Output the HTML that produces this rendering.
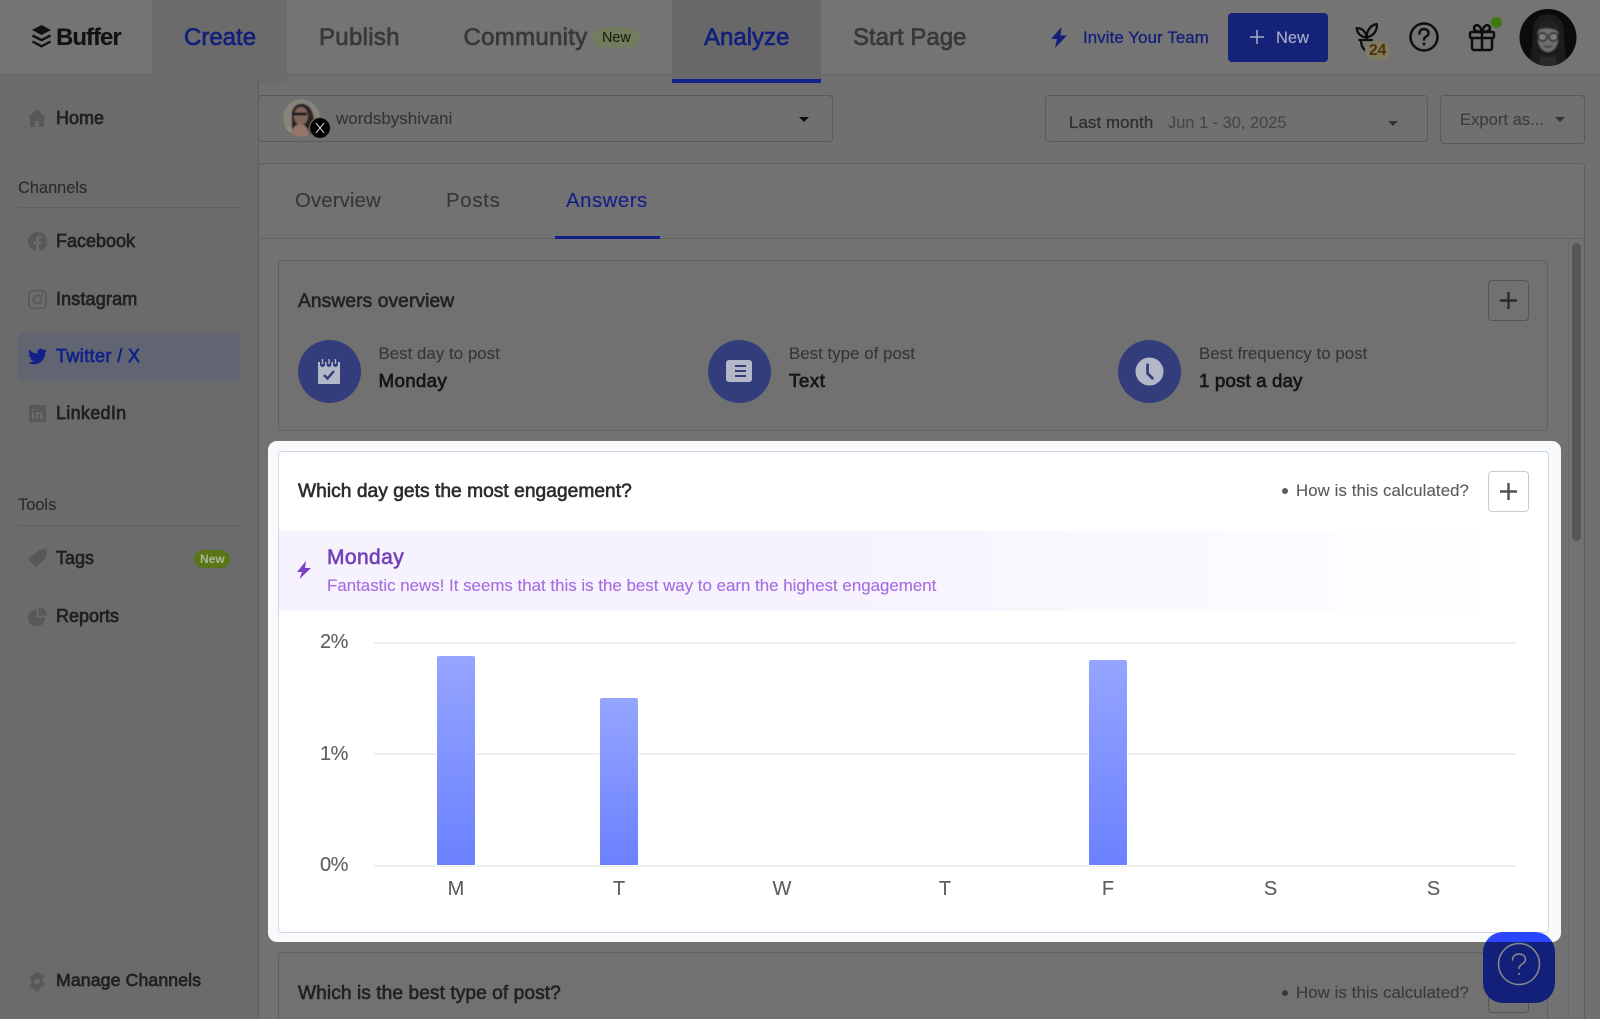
<!DOCTYPE html>
<html lang="en"><head><meta charset="utf-8"><title>Buffer Analyze</title>
<style>
*{box-sizing:border-box}
html{margin:0;padding:0;width:1600px;height:1019px;overflow:hidden}
body{margin:0;padding:0;position:relative;width:1600px;height:1019px;overflow:hidden;background:#707070;font-family:"Liberation Sans",Arial,sans-serif;color:#2b2b2b}
#p{position:absolute;left:0;top:0;width:1600px;height:1019px;overflow:hidden}
.a{position:absolute}
.t{position:absolute;white-space:nowrap;line-height:20px;height:20px;margin-top:-10px;-webkit-text-stroke:.12px currentColor}
.m{-webkit-text-stroke:.6px currentColor}
.n{font-size:24px;color:#383838;-webkit-text-stroke:.7px currentColor}
.s{font-size:18px;color:#202020;-webkit-text-stroke:.7px currentColor;left:56px}
.h{font-size:16.4px;color:#2a2a2a;left:18px}
.b{position:absolute;border:1px solid #5a5a5a;border-radius:4px}
.l{font-size:16.8px;letter-spacing:.06px;color:#363636}
.v{font-size:18.8px;color:#171717;-webkit-text-stroke:.7px currentColor}
.c{position:absolute;width:63px;height:63px;border-radius:50%;background:#343d7c;top:340px}
.pl{position:absolute;left:1488px;width:41px;height:41px;border-radius:4px}
.g{position:absolute;left:374px;width:1142px;height:2px;background:#eee}
.y{font-size:20px;letter-spacing:-.5px;color:#5e5e5e;left:320px}
.x{font-size:20px;color:#5e5e5e;width:40px;text-align:center}
.bar{position:absolute;width:38px;background:linear-gradient(#95a5ff,#6b80ff);border-radius:2px 2px 0 0;box-shadow:0 0 0 1px #fff}
.tb{font-size:20.4px;color:#363636}
svg{position:absolute;display:block}
</style></head>
<body><div id="p">
<!-- top bar -->
<div class="a" style="left:0;top:0;width:1600px;height:76px;background:#747474;border-bottom:2px solid #6a6a6a"></div>
<div class="a" style="left:152px;top:0;width:135px;height:83px;background:#6b6b6b"></div>
<div class="a" style="left:672px;top:0;width:149px;height:83px;background:#686868;border-bottom:4px solid #14248c"></div>

<svg style="left:31px;top:25px" width="21" height="23" viewBox="0 0 21 23"><path d="M10.500 0 20 5 10.500 10 1 5z" fill="#111"/><path d="M1.500 10.500l9 4.600 9-4.600M1.500 16.500l9 4.800 9-4.800" fill="none" stroke="#111" stroke-width="2.400"/></svg>
<div class="t" style="left:56px;top:38px;font-size:24px;font-weight:700;letter-spacing:-1px;color:#121212">Buffer</div>
<div class="t n" style="left:184px;top:38px;color:#13207a">Create</div>
<div class="t n" style="left:319px;top:38px;letter-spacing:.3px">Publish</div>
<div class="t n" style="left:463.500px;top:38px;letter-spacing:.3px">Community</div>
<div class="a" style="left:593px;top:27px;width:46px;height:21px;border-radius:11px;background:#747c5f"></div>
<div class="t" style="left:602px;top:37.500px;font-size:14.400px;color:#1a240e">New</div>
<div class="t n" style="left:704px;top:38px;color:#13207a">Analyze</div>
<div class="t n" style="left:853px;top:38px">Start Page</div>

<svg style="left:1049px;top:27px" width="20" height="21" viewBox="0 0 20 21"><path d="M12.500 0 2 12h6l-2 9L18 8.500h-6.500z" fill="#13207a"/></svg>
<div class="t" style="left:1083px;top:38px;font-size:16.800px;letter-spacing:.13px;color:#13207a;-webkit-text-stroke:.3px currentColor">Invite Your Team</div>
<div class="a" style="left:1228px;top:13px;width:100px;height:49px;border-radius:4px;background:#142278"></div>
<svg style="left:1250px;top:30px" width="14" height="14" viewBox="0 0 14 14"><path d="M7 0v14M0 7h14" stroke="#a8adc8" stroke-width="1.500"/></svg>
<div class="t" style="left:1276px;top:38px;font-size:16.500px;color:#a8adc8">New</div>

<svg style="left:1354px;top:22px" width="30" height="32" viewBox="0 0 30 32" fill="none" stroke="#0e0e0e" stroke-width="2.300" stroke-linejoin="round" stroke-linecap="round"><path d="M12.700 18V15.300C7 15.300 3 11 2.700 6.300c5-.6 9 3 10 9M12.700 15.300c0-7 4-12.300 10-13.300 1 6-3 12-10 13.300M5.300 18h12.500M7 18c0 5 1 8 4 10"/></svg>
<div class="a" style="left:1365px;top:41px;width:25px;height:20px;border-radius:10px;background:#7f7b62"></div>
<div class="t" style="left:1369px;top:51px;font-size:15.500px;font-weight:700;color:#4c340a">24</div>
<svg style="left:1409px;top:22px" width="30" height="30" viewBox="0 0 30 30" fill="none" stroke="#0e0e0e" stroke-width="2.500" stroke-linecap="round"><circle cx="15" cy="15" r="13.500"/><path d="M10.500 11.500c0-3 2.200-4.500 4.500-4.500s4.500 1.500 4.500 4.200c0 3.300-4.500 3.300-4.500 6.300"/><circle cx="15" cy="22" r=".6" stroke-width="1.800"/></svg>
<svg style="left:1468px;top:23px" width="28" height="29" viewBox="0 0 28 29" fill="none" stroke="#0e0e0e" stroke-width="2.500" stroke-linejoin="round"><rect x="2" y="9" width="24" height="6" rx="1.500"/><path d="M4 15v10a2 2 0 0 0 2 2h16a2 2 0 0 0 2-2V15M14 9v18M14 9c-6 0-8-2-8-4s3-4 5-2 3 6 3 6 1-4 3-6 5 0 5 2-2 4-8 4z"/></svg>
<div class="a" style="left:1491px;top:17px;width:11px;height:11px;border-radius:50%;background:#3f7a10"></div>
<svg style="left:1519px;top:9px" width="58" height="57" viewBox="0 0 58 57"><defs><clipPath id="av"><circle cx="29" cy="28.500" r="28.500"/></clipPath><filter id="bl"><feGaussianBlur stdDeviation=".7"/></filter></defs><g clip-path="url(#av)"><rect width="58" height="57" fill="#0b0b0b"/><g filter="url(#bl)"><path d="M14 30C12 12 20 5 29 5s18 6 16 26l3 26H10z" fill="#1c1c1c"/><ellipse cx="29" cy="28" rx="10.500" ry="15" fill="#6f6f6f"/><path d="M18 22c2-8 8-11 13-10 5 0 9 4 9 11-6-4-16-5-22-1z" fill="#222"/><ellipse cx="23.500" cy="28" rx="4.500" ry="4" fill="#7d7d7d" stroke="#111" stroke-width="1.400"/><ellipse cx="34.500" cy="28" rx="4.500" ry="4" fill="#7d7d7d" stroke="#111" stroke-width="1.400"/><path d="M25 37q4 2 8 0" stroke="#2f2f2f" stroke-width="1.500" fill="none"/><path d="M22 46c4 3 10 3 14 0l2 11H20z" fill="#2c2c2c"/></g></g></svg>

<!-- sidebar -->
<div class="a" style="left:0;top:77px;width:259px;height:942px;background:#6b6b6b;border-right:1px solid #5f5f5f"></div>
<svg style="left:28px;top:109px" width="18" height="18" viewBox="0 0 18 18"><path d="M9 0 18 9h-2v9h-5v-6H7v6H2V9H0z" fill="#585858"/></svg>
<div class="t s" style="top:118px">Home</div>
<div class="t h" style="top:188px">Channels</div>
<div class="a" style="left:18px;top:207px;width:222px;height:1px;background:#5f5f5f"></div>
<svg style="left:28px;top:232px" width="19" height="19" viewBox="0 0 24 24"><path fill="#585858" d="M24 12.073c0-6.627-5.373-12-12-12s-12 5.373-12 12c0 5.990 4.388 10.954 10.125 11.854v-8.385H7.078v-3.470h3.047V9.430c0-3.007 1.792-4.669 4.533-4.669 1.312 0 2.686.235 2.686.235v2.953H15.830c-1.491 0-1.956.925-1.956 1.874v2.250h3.328l-.532 3.470h-2.796v8.385C19.612 23.027 24 18.062 24 12.073z"/></svg>
<div class="t s" style="top:241px">Facebook</div>
<svg style="left:28px;top:290px" width="19" height="19" viewBox="0 0 19 19" fill="none" stroke="#585858" stroke-width="1.500"><rect x=".8" y=".8" width="17.400" height="17.400" rx="4"/><circle cx="9.500" cy="9.500" r="4"/><circle cx="14.300" cy="4.700" r=".5"/></svg>
<div class="t s" style="top:299px;letter-spacing:.15px">Instagram</div>
<div class="a" style="left:18px;top:333px;width:222px;height:48px;border-radius:4px;background:#616471"></div>
<svg style="left:28px;top:347px" width="19" height="19" viewBox="0 0 24 24"><path fill="#14208a" d="M23.953 4.570a10 10 0 01-2.825.775 4.958 4.958 0 002.163-2.723c-.951.555-2.005.959-3.127 1.184a4.920 4.920 0 00-8.384 4.482C7.690 8.095 4.067 6.130 1.640 3.162a4.822 4.822 0 00-.666 2.475c0 1.710.870 3.213 2.188 4.096a4.904 4.904 0 01-2.228-.616v.060a4.923 4.923 0 003.946 4.827 4.996 4.996 0 01-2.212.085 4.936 4.936 0 004.604 3.417 9.867 9.867 0 01-6.102 2.105c-.390 0-.779-.023-1.170-.067a13.995 13.995 0 007.557 2.209c9.053 0 13.998-7.496 13.998-13.985 0-.210 0-.420-.015-.630A9.935 9.935 0 0024 4.590z"/></svg>
<div class="t s" style="top:356px;color:#14208a;letter-spacing:.4px">Twitter / X</div>
<svg style="left:29px;top:405px" width="17" height="17" viewBox="0 0 17 17"><path fill="#585858" fill-rule="evenodd" d="M1 0h15a1 1 0 0 1 1 1v15a1 1 0 0 1-1 1H1a1 1 0 0 1-1-1V1a1 1 0 0 1 1-1zM3 7v7h2V7zm0-3v2h2V4zm4 3v7h2v-4c0-1.500 2-1.500 2 0v4h2.500V9.500c0-3-3-3.300-4.500-1.700V7z"/></svg>
<div class="t s" style="top:413px;letter-spacing:.3px">LinkedIn</div>
<div class="t h" style="top:505px">Tools</div>
<div class="a" style="left:18px;top:525px;width:222px;height:1px;background:#5f5f5f"></div>
<svg style="left:28px;top:549px" width="19" height="18" viewBox="0 0 19 18"><path fill="#585858" d="M11 1.200 17 0a1.500 1.500 0 0 1 2 1.500L18.200 8 9.500 17.500a1.500 1.500 0 0 1-2 0L.5 11a1.500 1.500 0 0 1 0-2z"/></svg>
<div class="t s" style="top:558px">Tags</div>
<div class="a" style="left:194px;top:550px;width:36px;height:18px;border-radius:9px;background:#5a7518"></div>
<div class="t" style="left:200px;top:559px;font-size:12px;font-weight:700;color:#a6b68c">New</div>
<svg style="left:28px;top:607px" width="19" height="19" viewBox="0 0 19 19"><path fill="#585858" d="M8.500 2.500V10.500H17A8.500 8.500 0 1 1 8.500 2.500z"/><path fill="#585858" d="M10.500 0A8.500 8.500 0 0 1 19 8.500H10.500z"/></svg>
<div class="t s" style="top:616px">Reports</div>
<svg style="left:28px;top:972px" width="18" height="19" viewBox="0 0 18 19"><path fill="#585858" fill-rule="evenodd" d="M7 0h4l.7 2.800 2.400-.9 2.400 3.400-2 2.200v2.800l2 2.200-2.400 3.400-2.400-.9L11 19H7l-.7-3-2.400.9-2.400-3.400 2-2.200V8.500l-2-2.200L3.900 2.900l2.400.9zM9 6.500a3 3 0 1 0 0 6 3 3 0 0 0 0-6z"/></svg>
<div class="t s" style="top:980px;font-size:17.800px;letter-spacing:.05px">Manage Channels</div>

<!-- selectors -->
<div class="b" style="left:258px;top:95px;width:575px;height:47px"></div>
<svg style="left:283px;top:99px" width="50" height="40" viewBox="0 0 50 40"><defs><clipPath id="ac"><circle cx="18.500" cy="19" r="18.500"/></clipPath><filter id="bs"><feGaussianBlur stdDeviation=".8"/></filter></defs><g clip-path="url(#ac)"><rect width="38" height="38" fill="#86847a"/><g filter="url(#bs)"><path d="M9 38V14C10 3 25 1 29 13c3 8 3 16 2 25z" fill="#2a2322"/><ellipse cx="18" cy="17" rx="7" ry="9" fill="#82665a"/><path d="M10 15h14" stroke="#141414" stroke-width="3"/><path d="M8 38c0-9 5-13 9-13s10 5 10 13z" fill="#93756b"/><path d="M0 28h8v10H0z" fill="#9a8f80"/></g></g><circle cx="37" cy="29" r="10.500" fill="#000" stroke="#6f6a60" stroke-width="1.200"/><path d="M33 24l8 10M41 24l-8 10" stroke="#bdbdbd" stroke-width="1.200"/></svg>
<div class="t" style="left:336px;top:118.500px;font-size:17px;color:#343434">wordsbyshivani</div>
<div class="a" style="left:799px;top:117px;border:5px solid transparent;border-top:5px solid #0e0e0e;border-bottom:0"></div>
<div class="b" style="left:1045px;top:95px;width:383px;height:47px"></div>
<div class="t" style="left:1069px;top:123px;font-size:16.800px;letter-spacing:.13px;color:#303030;-webkit-text-stroke:.3px currentColor">Last month</div>
<div class="t" style="left:1168px;top:123px;font-size:16.400px;color:#464646">Jun 1 - 30, 2025</div>
<div class="a" style="left:1388px;top:121px;border:5px solid transparent;border-top:5px solid #333;border-bottom:0"></div>
<div class="b" style="left:1440px;top:95px;width:145px;height:49px"></div>
<div class="t" style="left:1460px;top:120px;font-size:16.600px;color:#3c3c3c">Export as...</div>
<div class="a" style="left:1555px;top:117px;border:5px solid transparent;border-top:5px solid #333;border-bottom:0"></div>

<!-- panel -->
<div class="a" style="left:258px;top:163px;width:1327px;height:860px;border:1px solid #5f5f5f;border-radius:4px 4px 0 0;background:#727272"></div>
<div class="a" style="left:259px;top:238px;width:1325px;height:1px;background:#636363"></div>
<div class="t tb" style="left:295px;top:200.500px;letter-spacing:.1px">Overview</div>
<div class="t tb" style="left:446px;top:200.500px;letter-spacing:.7px">Posts</div>
<div class="t tb" style="left:566px;top:200.500px;letter-spacing:.5px;color:#14208a">Answers</div>
<div class="a" style="left:555px;top:236px;width:105px;height:3px;background:#14208a"></div>
<div class="a" style="left:1568px;top:239px;width:1px;height:780px;background:#676767"></div>
<div class="a" style="left:1572px;top:243px;width:9px;height:298px;border-radius:5px;background:#565656"></div>

<!-- overview card -->
<div class="b" style="left:278px;top:260px;width:1270px;height:171px;border-color:#606060;background:#717171"></div>
<div class="t m" style="left:298px;top:301.500px;font-size:19.200px;letter-spacing:.1px;color:#222">Answers overview</div>
<div class="c" style="left:298px"></div>
<svg style="left:316px;top:358px" width="26" height="26" viewBox="0 0 26 26"><path fill="#b4b7c8" d="M2 4h2v2.500a2.500 2.500 0 0 0 5 0V4h1.500v2.500a2.500 2.500 0 0 0 5 0V4H17v2.500a2.500 2.500 0 0 0 5 0V4h2v21a1 1 0 0 1-1 1H3a1 1 0 0 1-1-1z"/><path d="M8 17l3.500 3.500L18 13" fill="none" stroke="#343d7c" stroke-width="2.400"/><path d="M6.500 1v5M13 1v5M19.500 1v5" stroke="#b4b7c8" stroke-width="1.400"/></svg>
<div class="t l" style="left:378.500px;top:354px">Best day to post</div>
<div class="t v" style="left:378.500px;top:381px;letter-spacing:.3px">Monday</div>
<div class="c" style="left:708px"></div>
<svg style="left:726px;top:360px" width="26" height="22" viewBox="0 0 26 22"><rect width="26" height="22" rx="3" fill="#b4b7c8"/><path d="M9 6h11M9 11h11M9 16h11" stroke="#343d7c" stroke-width="2"/></svg>
<div class="t l" style="left:789px;top:354px">Best type of post</div>
<div class="t v" style="left:789px;top:381px;letter-spacing:.5px">Text</div>
<div class="c" style="left:1118px"></div>
<svg style="left:1135px;top:357px" width="29" height="29" viewBox="0 0 30 30"><circle cx="15" cy="15" r="14.500" fill="#b4b7c8"/><path d="M13 8v9l5 5" fill="none" stroke="#343d7c" stroke-width="2.800" stroke-linecap="round"/></svg>
<div class="t l" style="left:1199px;top:354px">Best frequency to post</div>
<div class="t v" style="left:1199px;top:381px;letter-spacing:.1px">1 post a day</div>
<div class="pl" style="top:280px;border:1px solid #555"></div>
<svg style="left:1500px;top:292px" width="17" height="17" viewBox="0 0 17 17"><path d="M8.500 0v17M0 8.500h17" stroke="#2b2b2b" stroke-width="2.400"/></svg>

<!-- second card, dimmed -->
<div class="b" style="left:278px;top:952px;width:1270px;height:90px;border-color:#606060;background:#717171"></div>
<div class="t m" style="left:298px;top:994px;font-size:19.200px;letter-spacing:.05px;color:#222">Which is the best type of post?</div>
<div class="a" style="left:1282px;top:990px;width:6px;height:6px;border-radius:50%;background:#383838"></div>
<div class="t" style="left:1296px;top:993px;font-size:16.800px;letter-spacing:.1px;color:#3a3a3a">How is this calculated?</div>
<div class="pl" style="top:972px;border:1px solid #555"></div>

<!-- highlight -->
<div class="a" style="left:268px;top:441px;width:1293px;height:501px;border-radius:9px;background:#f8f9fb"></div>
<div class="a" style="left:278px;top:451px;width:1271px;height:482px;border:1px solid #cfd8e6;border-radius:4px;background:#fff"></div>
<div class="t m" style="left:298px;top:492px;font-size:19.200px;letter-spacing:.03px;color:#2c2c2c">Which day gets the most engagement?</div>
<div class="a" style="left:1282px;top:488px;width:6px;height:6px;border-radius:50%;background:#5c5c5c"></div>
<div class="t" style="left:1296px;top:491px;font-size:16.800px;letter-spacing:.1px;color:#5a5a5a">How is this calculated?</div>
<div class="pl" style="top:471px;border:1px solid #c6ccd6;background:#fff"></div>
<svg style="left:1500px;top:483px" width="17" height="17" viewBox="0 0 17 17"><path d="M8.500 0v17M0 8.500h17" stroke="#505050" stroke-width="2.400"/></svg>
<div class="a" style="left:279px;top:531px;width:1269px;height:80px;background:linear-gradient(90deg,#f7f3fe 0,#f7f3fe 45%,#fcfaff 78%,#fff 96%)"></div>
<svg style="left:297px;top:561px" width="14" height="18" viewBox="0 0 14 18"><path d="M9 0 0 11h5l-2.500 7L14 7H8z" fill="#7a3fc4"/></svg>
<div class="t m" style="left:327px;top:558px;font-size:21px;letter-spacing:.4px;color:#7440b8">Monday</div>
<div class="t" style="left:327px;top:586px;font-size:16.900px;color:#a56ce0">Fantastic news! It seems that this is the best way to earn the highest engagement</div>

<!-- chart -->
<div class="g" style="top:642px"></div>
<div class="g" style="top:753px"></div>
<div class="g" style="top:865px"></div>
<div class="t y" style="top:642px">2%</div>
<div class="t y" style="top:754px">1%</div>
<div class="t y" style="top:865px">0%</div>
<div class="bar" style="left:437px;top:656px;height:209px"></div>
<div class="bar" style="left:600px;top:698px;height:167px"></div>
<div class="bar" style="left:1089px;top:660px;height:205px"></div>
<div class="t x" style="left:436px;top:889px">M</div>
<div class="t x" style="left:599px;top:889px">T</div>
<div class="t x" style="left:762px;top:889px">W</div>
<div class="t x" style="left:925px;top:889px">T</div>
<div class="t x" style="left:1088px;top:889px">F</div>
<div class="t x" style="left:1250.500px;top:889px">S</div>
<div class="t x" style="left:1413.500px;top:889px">S</div>

<!-- help button -->
<div class="a" style="left:1483px;top:932px;width:72px;height:71px;border-radius:20px;background:linear-gradient(#2c47fb 0,#2c47fb 10px,#13207a 10px)"></div>
<svg style="left:1497px;top:942px" width="44" height="44" viewBox="0 0 44 44" fill="none" stroke="#8a8a8a" stroke-width="1.500" stroke-linecap="round"><circle cx="22" cy="22" r="20.500"/><path d="M15.500 18c0-4 3-6 6.500-6s6.500 2 6.500 5.500c0 4.500-6.500 4.500-6.500 9"/><circle cx="22" cy="32" r=".4"/></svg>
</div></body></html>
